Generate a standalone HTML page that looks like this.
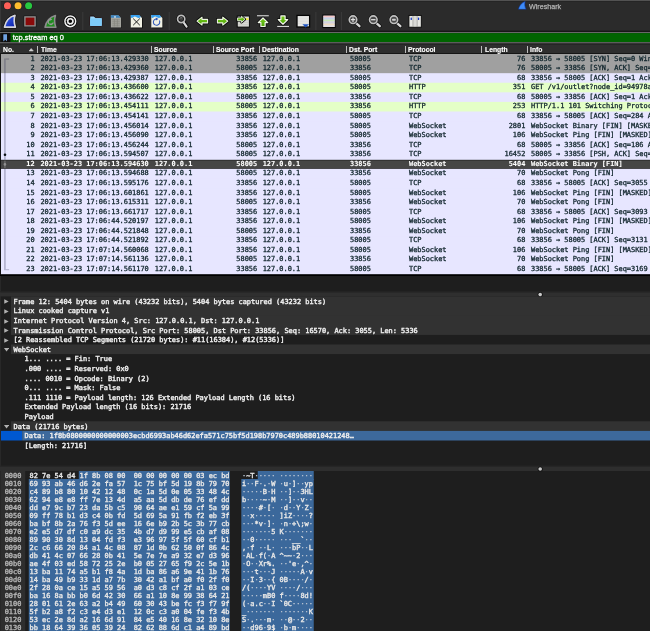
<!DOCTYPE html>
<html lang="en">
<head>
<meta charset="utf-8">
<title>Wireshark</title>
<style>
html,body{margin:0;padding:0;background:#1e1e1e;}
body{width:650px;height:631px;overflow:hidden;font-family:"Liberation Sans",sans-serif;}
#win{will-change:transform;position:absolute;left:0;top:0;width:650px;height:631px;overflow:hidden;background:#1e1e1e;}
i{font-style:normal}
/* ---- title / toolbar ---- */
#bg{position:absolute;left:0;top:0;width:650px;height:631px}
#titlebar{position:absolute;left:0;top:0;width:650px;height:31px}
#title{-webkit-text-stroke:0.25px;position:absolute;left:518.3px;top:1.2px;height:10px;white-space:nowrap;color:#b4b4b4;font-size:7.2px;line-height:10px}
#title svg{position:absolute;left:0;top:0.2px}
#title span{position:absolute;left:10.9px;top:0.5px;font-size:7.7px;transform:scaleX(.93);transform-origin:0 0}
#tb{position:absolute;left:0;top:0}
/* ---- filter ---- */
#filterbar{position:absolute;left:0;top:32px;width:650px;height:12px}
#bm{position:absolute;left:1.5px;top:1px;width:8.6px;height:10px}
#bm svg{position:absolute;left:1.4px;top:0.9px}
#filter{-webkit-text-stroke:0.3px #fff;position:absolute;left:10.6px;top:1px;width:640px;height:10px;color:#fff;font-size:7.7px;line-height:10px;padding-left:1.8px;white-space:nowrap;box-sizing:border-box;transform:scaleX(.965);transform-origin:0 0}
/* ---- packet list ---- */
#plist{position:absolute;left:0;top:44px;width:650px;height:249px;}
#phead{position:absolute;left:0;top:0;width:650px;height:9.8px;}
.hc{-webkit-text-stroke:0.15px #fff;position:absolute;top:1px;color:#fff;font-weight:bold;font-size:7.8px;line-height:10px;white-space:nowrap;transform:scaleX(.868);transform-origin:0 0}
.hs{position:absolute;top:2px;width:1px;height:7.2px;background:#bdbdbd}
.sort{position:absolute;left:28.4px;top:2.8px;width:6.4px;height:4.8px}
.pr{-webkit-text-stroke:0.3px;position:absolute;left:1px;width:649px;height:9.66px;margin-top:-44px;font-family:"DejaVu Sans Mono","Liberation Mono",monospace;font-size:6.93px;line-height:10px;color:#12272e;white-space:pre;overflow:hidden}
.pr.sel{color:#fff;font-weight:bold;-webkit-text-stroke:0.08px}
.pt_{position:absolute;left:0;width:649px;height:10px}
.c{position:absolute;top:0}
.no{right:615.3px}
.tm{left:39.4px}
.sa{left:153.8px}
.sp{right:392.8px}
.da{left:261.7px}
.dp{left:349px}
.pt{left:408px}
.ln{right:124.7px}
.inf{left:530px}
/* ---- splitters ---- */
.split{position:absolute;left:0;width:650px}
/* ---- tree ---- */
#tree{position:absolute;left:0;top:0;width:650px;height:0}
.tr{-webkit-text-stroke:0.42px;position:absolute;left:0;width:650px;height:9.6px;font-family:"DejaVu Sans Mono","Liberation Mono",monospace;font-size:6.93px;line-height:10px;color:#ececec;white-space:pre}
.tw{position:absolute;left:0.6px;top:0.9px;width:8.6px;height:8.6px;fill:#b0b0b0}
.tt{position:absolute;left:13.5px;z-index:2}
.kid .tt{left:24.6px}
/* ---- hex ---- */
#hex{position:absolute;left:0;top:0;width:650px;height:0}
.hr{-webkit-text-stroke:0.38px;position:absolute;left:0;width:650px;height:8px;font-family:"DejaVu Sans Mono","Liberation Mono",monospace;font-size:6.93px;line-height:8px;color:#e6e6e6;white-space:pre}
.ht{position:absolute;left:0;width:650px;height:8px}
.hr span{position:absolute;top:0}
.ho{left:4.7px;color:#b4b4b4}
.hb{left:29.5px}
.ha{left:242px}
.hr b{font-weight:normal}
.ha i{color:#b9c4d2}

</style>
</head>
<body>
<div id="win">
<svg id="bg" width="650" height="631" viewBox="0 0 650 631">
<rect x="0" y="0" width="650" height="30.8" fill="#2b2b2b"/>
<rect x="0" y="0" width="650" height="0.8" fill="#6e6e6e"/>
<rect x="0" y="0.8" width="650" height="0.6" fill="#1f1f1f"/>
<rect x="0" y="0.8" width="0.9" height="30" fill="#3a3a3a"/>
<rect x="0" y="30.8" width="650" height="1.2" fill="#171717"/>
<rect x="0" y="32" width="650" height="12.5" fill="#1b1b1b"/>
<rect x="0" y="32" width="650" height="1.1" fill="#676767"/>
<rect x="0" y="42" width="650" height="1.4" fill="#5c5c5c"/>
<rect x="1.4" y="33.1" width="8.8" height="8.9" fill="#0d0d0d"/>
<rect x="10.6" y="33.1" width="639.4" height="8.9" fill="#006400"/>
<rect x="0" y="44.5" width="650" height="8.6" fill="#2e2e2e"/>
<rect x="0" y="53.1" width="650" height="0.8" fill="#151515"/>
<rect x="1.00" y="54.00" width="649.00" height="10.58" fill="#a0a0a0"/>
<rect x="1.00" y="63.58" width="649.00" height="10.58" fill="#a0a0a0"/>
<rect x="1.00" y="73.17" width="649.00" height="10.58" fill="#e7e6ff"/>
<rect x="1.00" y="82.75" width="649.00" height="10.58" fill="#e4ffc7"/>
<rect x="1.00" y="92.33" width="649.00" height="10.58" fill="#e7e6ff"/>
<rect x="1.00" y="101.91" width="649.00" height="10.58" fill="#e4ffc7"/>
<rect x="1.00" y="111.50" width="649.00" height="10.58" fill="#e7e6ff"/>
<rect x="1.00" y="121.08" width="649.00" height="10.58" fill="#e7e6ff"/>
<rect x="1.00" y="130.66" width="649.00" height="10.58" fill="#e7e6ff"/>
<rect x="1.00" y="140.25" width="649.00" height="10.58" fill="#e7e6ff"/>
<rect x="1.00" y="149.83" width="649.00" height="10.58" fill="#e7e6ff"/>
<rect x="1.00" y="159.41" width="649.00" height="10.58" fill="#e7e6ff"/>
<rect x="1.00" y="169.00" width="649.00" height="10.58" fill="#e7e6ff"/>
<rect x="1.00" y="178.58" width="649.00" height="10.58" fill="#e7e6ff"/>
<rect x="1.00" y="188.16" width="649.00" height="10.58" fill="#e7e6ff"/>
<rect x="1.00" y="197.75" width="649.00" height="10.58" fill="#e7e6ff"/>
<rect x="1.00" y="207.33" width="649.00" height="10.58" fill="#e7e6ff"/>
<rect x="1.00" y="216.91" width="649.00" height="10.58" fill="#e7e6ff"/>
<rect x="1.00" y="226.49" width="649.00" height="10.58" fill="#e7e6ff"/>
<rect x="1.00" y="236.08" width="649.00" height="10.58" fill="#e7e6ff"/>
<rect x="1.00" y="245.66" width="649.00" height="10.58" fill="#e7e6ff"/>
<rect x="1.00" y="255.24" width="649.00" height="10.58" fill="#e7e6ff"/>
<rect x="1.00" y="264.83" width="649.00" height="9.58" fill="#e7e6ff"/>
<rect x="1.00" y="159.80" width="649.00" height="9.00" fill="#232323"/>
<rect x="1.00" y="160.50" width="649.00" height="7.60" fill="#464646"/>
<rect x="4.00" y="58.49" width="1.80" height="101.31" fill="rgba(36,36,70,0.25)"/>
<rect x="4.00" y="168.80" width="1.80" height="101.42" fill="rgba(36,36,70,0.25)"/>
<rect x="5.80" y="58.49" width="3.30" height="1.10" fill="rgba(36,36,70,0.33)"/>
<rect x="5.80" y="269.12" width="3.30" height="1.10" fill="rgba(36,36,70,0.25)"/>
<rect x="4.00" y="160.50" width="1.80" height="7.60" fill="rgba(255,255,255,0.16)"/>
<circle cx="5" cy="154.82" r="1.3" fill="#0a0f12"/>
<circle cx="4.9" cy="164.40" r="1.4" fill="rgba(255,255,255,0.3)"/>
<rect x="0.00" y="274.41" width="650.00" height="1.60" fill="#000"/>
<rect x="0.00" y="53.90" width="0.90" height="220.51" fill="rgba(0,0,0,0.33)"/>
<rect x="0.00" y="276.01" width="0.90" height="354.99" fill="#2a2a2a"/>
<rect x="0.00" y="291.20" width="650.00" height="1.40" fill="#262626"/>
<rect x="0.00" y="292.50" width="650.00" height="3.90" fill="#2f2f2f"/>
<circle cx="540.2" cy="294.6" r="2.6" fill="#121212"/><circle cx="540.2" cy="294.6" r="1.8" fill="#cacaca"/>
<rect x="11.00" y="296.50" width="639.00" height="10.60" fill="#323232"/>
<rect x="11.00" y="306.10" width="639.00" height="10.60" fill="#323232"/>
<rect x="11.00" y="315.70" width="639.00" height="10.60" fill="#323232"/>
<rect x="11.00" y="325.30" width="639.00" height="9.60" fill="#323232"/>
<rect x="11.00" y="344.50" width="639.00" height="9.60" fill="#323232"/>
<rect x="11.00" y="421.30" width="639.00" height="9.60" fill="#323232"/>
<rect x="1.00" y="430.90" width="21.20" height="9.60" fill="#0058d0"/>
<rect x="22.20" y="430.90" width="627.80" height="9.60" fill="#3d699c"/>
<rect x="0.00" y="465.60" width="650.00" height="1.20" fill="#262626"/>
<rect x="0.00" y="466.70" width="650.00" height="4.30" fill="#2e2e2e"/>
<circle cx="540.2" cy="469" r="2.6" fill="#121212"/><circle cx="540.2" cy="469" r="1.8" fill="#cacaca"/>
<rect x="1.00" y="471.00" width="24.20" height="160.00" fill="#2e2e2e"/>
<rect x="78.81" y="471.00" width="150.93" height="9.00" fill="#3b689b"/>
<rect x="257.77" y="471.00" width="55.98" height="9.00" fill="#3b689b"/>
<rect x="28.80" y="479.00" width="200.94" height="152.00" fill="#3b689b"/>
<rect x="241.30" y="479.00" width="72.45" height="152.00" fill="#3b689b"/>
</svg>

<div id="titlebar">
<div id="title"><svg viewBox="0 0 16 16" width="8.6" height="8.6"><path d="M0.6 15.4 C2 9.2 6.5 2.8 13.6 0.6 C12.2 5.2 12.6 10.6 15.4 15.4 Z" fill="#2f6fe0" stroke="#0b2f86" stroke-width="0.8"/><path d="M2 14.6 C3.4 10 6.6 5.4 11.6 3 C10.8 7.2 11.4 11 13.2 14.6 Z" fill="#3f8cf6"/></svg><span>Wireshark</span></div>
<svg id="tb" width="650" height="32" viewBox="0 0 650 32">
<defs>
<linearGradient id="gb" x1="0" y1="0" x2="1" y2="1"><stop offset="0" stop-color="#3f6cf0"/><stop offset="1" stop-color="#0618a8"/></linearGradient>
<linearGradient id="gg" x1="0" y1="0" x2="0" y2="1"><stop offset="0" stop-color="#7ccc20"/><stop offset="1" stop-color="#4aa406"/></linearGradient>
</defs>
<!-- window buttons -->
<circle cx="7.45" cy="5.85" r="3.95" fill="#1a1a1a"/><circle cx="7.45" cy="5.85" r="3.5" fill="#fe5f57"/>
<circle cx="18.05" cy="5.85" r="3.95" fill="#1a1a1a"/><circle cx="18.05" cy="5.85" r="3.5" fill="#febc2e"/>
<circle cx="28.6" cy="5.85" r="3.95" fill="#1a1a1a"/><circle cx="28.6" cy="5.85" r="3.5" fill="#28c840"/>
<!-- start capture (blue fin) -->
<g>
<path d="M4.4 27.1 C5.6 21.6 9.3 16.9 15 15.3 C13.8 19.2 14 23.4 15.4 27.1 Z" fill="#0a0a0a" stroke="#0a0a0a" stroke-width="2.9" stroke-linejoin="round"/>
<path d="M4.4 27.1 C5.6 21.6 9.3 16.9 15 15.3 C13.8 19.2 14 23.4 15.4 27.1 Z" fill="url(#gb)" stroke="#d4d4dc" stroke-width="1.7" stroke-linejoin="round"/>
</g>
<!-- stop -->
<rect x="24.9" y="16.9" width="10.2" height="9" fill="#8c0f0f" stroke="#0c0c0c" stroke-width="2.4"/><rect x="24.9" y="16.9" width="10.2" height="9" fill="#8a0a0a" stroke="#8e8e8e" stroke-width="1.4"/>
<!-- restart (green fin) -->
<g>
<path d="M45 27.3 C46.2 21.8 49.8 17.2 55.4 15.6 C54.2 19.5 54.4 23.6 55.8 27.3 Z" fill="#1f8c1f" stroke="#8c8c8c" stroke-width="1.6" stroke-linejoin="round"/>
<path d="M51.2 19.6 A2.5 2.5 0 1 0 53.2 22.4" fill="none" stroke="#9a9a9a" stroke-width="1.1"/>
<path d="M49.4 23.6 L52.6 23.6 L51 25.6 Z" fill="#9a9a9a"/>
<path d="M50.4 17.8 L52.2 19.8 L50 20.6 Z" fill="#9a9a9a"/>
</g>
<!-- options -->
<g>
<circle cx="70.3" cy="21.3" r="6.8" fill="#070707"/>
<circle cx="70.3" cy="21.3" r="5.4" fill="none" stroke="#f4f4f4" stroke-width="1.45"/>
<circle cx="70.3" cy="21.3" r="2.55" fill="none" stroke="#f0f0f0" stroke-width="1.5"/>
<circle cx="70.3" cy="21.3" r="3.3" fill="none" stroke="#e8e8e8" stroke-width="0.8" stroke-dasharray="1.2 1.39"/>
</g>
<rect x="82.3" y="12" width="1" height="18" fill="#3b3b3b"/>
<!-- open folder -->
<g>
<path d="M89.7 16.9 Q89.7 16 90.6 16 L94 16 L95.3 17.6 L101.3 17.6 Q102.2 17.6 102.2 18.5 L102.2 25.4 Q102.2 26.3 101.3 26.3 L90.6 26.3 Q89.7 26.3 89.7 25.4 Z" fill="#9ad6f9" stroke="#1c0808" stroke-width="0.9"/>
<path d="M90.1 18.4 L101.8 18.4 L101.8 25.3 Q101.8 25.9 101.2 25.9 L90.7 25.9 Q90.1 25.9 90.1 25.3 Z" fill="#7ecbf8"/>
</g>
<!-- save -->
<g>
<path d="M111.4 15.8 L119 15.8 L121.6 18.4 L121.6 28 L111.4 28 Z" fill="#101010"/>
<path d="M110.9 15.2 L118.4 15.2 L121.1 17.9 L121.1 27.5 L110.9 27.5 Z" fill="#a4a49e"/>
<path d="M110.9 15.2 L118.4 15.2 L120.2 17 L120.2 17.7 L110.9 17.7 Z" fill="#3a84c0"/>
<rect x="114.2" y="16.2" width="1.6" height="1.5" fill="#dfe8f0"/>
<path d="M112.2 19.8 H119.8 M112.2 21.8 H119.8 M112.2 23.8 H119.8 M112.2 25.8 H119.8 M114.4 19 V26.4 M117.4 19 V26.4" stroke="#85857e" stroke-width="0.7" fill="none"/>
</g>
<!-- close -->
<g>
<path d="M131.5 15.5 L139.6 15.5 L142.7 18.6 L142.7 28.2 L131.5 28.2 Z" fill="#080808"/>
<path d="M130.8 14.9 L138.9 14.9 L142 18 L142 27.6 L130.8 27.6 Z" fill="#f0f0e4"/>
<path d="M130.8 14.9 L138.9 14.9 L140.6 16.6 L140.6 17.2 Q138.4 18.6 136.6 17.2 Q134.6 15.8 133.4 17.2 Q132 18.6 130.8 17.6 Z" fill="#36a0f0"/>
<path d="M133.2 18.6 L139.8 25.2 M139.8 18.6 L133.2 25.2" stroke="#141414" stroke-width="0.95" fill="none"/>
</g>
<!-- reload -->
<g>
<path d="M152 15.5 L160.1 15.5 L163.1 18.6 L163.1 28.2 L152 28.2 Z" fill="#080808"/>
<path d="M151.3 14.9 L159.4 14.9 L162.4 18 L162.4 27.6 L151.3 27.6 Z" fill="#f0f0e4"/>
<path d="M151.3 14.9 L159.4 14.9 L161 16.6 L161 17.2 Q158.8 18.6 157 17.2 Q155 15.8 153.8 17.2 Q152.4 18.6 151.3 17.6 Z" fill="#36a0f0"/>
<path d="M159.4 20.6 A3.2 3.2 0 1 1 156.2 18.9" fill="none" stroke="#2c55b8" stroke-width="1.05"/>
<path d="M155.8 17.4 L158.4 18.9 L155.9 20.5 Z" fill="#2c55b8"/>
</g>
<rect x="168.7" y="12" width="1" height="18" fill="#3b3b3b"/>
<!-- find -->
<g>
<path d="M183.6 22.3 L186.6 26.6" stroke="#0a0a0a" stroke-width="3.8" stroke-linecap="round"/>
<circle cx="181.2" cy="19" r="3.6" fill="#3e3e3e" stroke="#0a0a0a" stroke-width="3"/>
<path d="M183.6 22.3 L186.6 26.6" stroke="#dadada" stroke-width="2.1" stroke-linecap="round"/>
<circle cx="181.2" cy="19" r="3.6" fill="none" stroke="#bcbcbc" stroke-width="1.7"/>
<path d="M179.6 18.6 Q180.6 17.2 182.4 17.8" stroke="#8a8a8a" stroke-width="0.8" fill="none"/>
</g>
<!-- back -->
<g>
<path d="M197 21.1 L202 17.1 L202 19.3 L207.6 19.3 L207.6 22.9 L202 22.9 L202 25.1 Z" fill="#0a0a0a" stroke="#0a0a0a" stroke-width="2.8" stroke-linejoin="round"/>
<path d="M197 21.1 L202 17.1 L202 19.3 L207.6 19.3 L207.6 22.9 L202 22.9 L202 25.1 Z" fill="url(#gg)" stroke="#eef4e4" stroke-width="1.15" stroke-linejoin="round"/>
</g>
<!-- forward -->
<g>
<path d="M227.8 21.1 L222.8 17.1 L222.8 19.3 L217.4 19.3 L217.4 22.9 L222.8 22.9 L222.8 25.1 Z" fill="#0a0a0a" stroke="#0a0a0a" stroke-width="2.8" stroke-linejoin="round"/>
<path d="M227.8 21.1 L222.8 17.1 L222.8 19.3 L217.4 19.3 L217.4 22.9 L222.8 22.9 L222.8 25.1 Z" fill="url(#gg)" stroke="#eef4e4" stroke-width="1.15" stroke-linejoin="round"/>
</g>
<!-- go to packet -->
<g>
<rect x="237.2" y="16" width="12.2" height="11" fill="#dededa" stroke="#0a0a0a" stroke-width="1"/>
<path d="M238.2 20.8 H248.8 M238.2 22.6 H248.8 M238.2 24.4 H248.8 M238.2 26 H248.8" stroke="#bcbcb8" stroke-width="0.55"/>
<rect x="245.4" y="18.3" width="3.2" height="1.5" fill="#f6e830"/>
<path d="M245 19.3 L241.4 16.2 L241.4 17.9 L237.6 17.9 L237.6 20.7 L241.4 20.7 L241.4 22.4 Z" fill="#0a0a0a" stroke="#0a0a0a" stroke-width="2.2" stroke-linejoin="round"/>
<path d="M245 19.3 L241.4 16.2 L241.4 17.9 L237.6 17.9 L237.6 20.7 L241.4 20.7 L241.4 22.4 Z" fill="url(#gg)" stroke="#eef4e4" stroke-width="0.9" stroke-linejoin="round"/>
</g>
<!-- go first -->
<g>
<rect x="257" y="15.2" width="11.8" height="1.1" fill="#d6d6d6"/>
<path d="M263 18 L267.8 22.6 L265.1 22.6 L265.1 26.5 L260.9 26.5 L260.9 22.6 L258.2 22.6 Z" fill="#0a0a0a" stroke="#0a0a0a" stroke-width="2.7" stroke-linejoin="round"/>
<path d="M263 18 L267.8 22.6 L265.1 22.6 L265.1 26.5 L260.9 26.5 L260.9 22.6 L258.2 22.6 Z" fill="url(#gg)" stroke="#f2f6ea" stroke-width="1.2" stroke-linejoin="round"/>
</g>
<!-- go last -->
<g>
<rect x="277.2" y="25.9" width="11.8" height="1.1" fill="#d6d6d6"/>
<path d="M283 24.2 L287.8 19.6 L285.1 19.6 L285.1 15.9 L280.9 15.9 L280.9 19.6 L278.2 19.6 Z" fill="#0a0a0a" stroke="#0a0a0a" stroke-width="2.7" stroke-linejoin="round"/>
<path d="M283 24.2 L287.8 19.6 L285.1 19.6 L285.1 15.9 L280.9 15.9 L280.9 19.6 L278.2 19.6 Z" fill="url(#gg)" stroke="#f2f6ea" stroke-width="1.2" stroke-linejoin="round"/>
</g>
<!-- autoscroll -->
<g>
<rect x="297" y="15.4" width="12.6" height="11.6" fill="#e9e9e7" stroke="#050505" stroke-width="1.3"/>
<path d="M298 18.2 H308.6 M298 20 H308.6 M298 21.8 H308.6 M298 23.6 H308.6" stroke="#d2d2ce" stroke-width="0.5"/>
<path d="M302.4 24.2 L309 24.2 L305.7 27.6 Z" fill="#1f54c0"/>
</g>
<rect x="315.4" y="12" width="1" height="18" fill="#3b3b3b"/>
<!-- colorize -->
<g>
<rect x="322.8" y="15.1" width="12.4" height="12.4" fill="#dcdce4" stroke="#060606" stroke-width="1.1"/>
<rect x="323.4" y="15.7" width="11.2" height="1.8" fill="#f4c4c4"/>
<rect x="323.4" y="17.5" width="11.2" height="2.1" fill="#c4d0e8"/>
<rect x="323.4" y="19.6" width="11.2" height="1.8" fill="#c8e8b4"/>
<rect x="323.4" y="21.4" width="11.2" height="2.2" fill="#d2d2e0"/>
<rect x="323.4" y="23.6" width="11.2" height="1.7" fill="#f0dcc0"/>
<rect x="323.4" y="25.3" width="11.2" height="1.6" fill="#e4e0e0"/>
</g>
<rect x="340.9" y="12" width="1" height="18" fill="#3b3b3b"/>
<!-- zoom in -->
<g>
<path d="M355.8 22.8 L359.5 26.2" stroke="#0c0c0c" stroke-width="3.6" stroke-linecap="round"/><path d="M355.8 22.8 L359.5 26.2" stroke="#d6d6d6" stroke-width="2.3" stroke-linecap="round"/>
<circle cx="353" cy="19.7" r="3.8" fill="#484848" stroke="#0c0c0c" stroke-width="2.6"/><circle cx="353" cy="19.7" r="3.8" fill="#484848" stroke="#c0c0c0" stroke-width="1.6"/>
<path d="M350.8 19.7 H355.2 M353 17.5 V21.9" stroke="#e0e0e0" stroke-width="1.2"/>
</g>
<!-- zoom out -->
<g>
<path d="M376.1 22.8 L379.8 26.2" stroke="#0c0c0c" stroke-width="3.6" stroke-linecap="round"/><path d="M376.1 22.8 L379.8 26.2" stroke="#d6d6d6" stroke-width="2.3" stroke-linecap="round"/>
<circle cx="373.3" cy="19.7" r="3.8" fill="#484848" stroke="#0c0c0c" stroke-width="2.6"/><circle cx="373.3" cy="19.7" r="3.8" fill="#484848" stroke="#c0c0c0" stroke-width="1.6"/>
<path d="M371.1 19.7 H375.5" stroke="#e0e0e0" stroke-width="1.3"/>
</g>
<!-- zoom reset -->
<g>
<path d="M396.7 22.8 L400.4 26.2" stroke="#0c0c0c" stroke-width="3.6" stroke-linecap="round"/><path d="M396.7 22.8 L400.4 26.2" stroke="#d6d6d6" stroke-width="2.3" stroke-linecap="round"/>
<circle cx="393.9" cy="19.7" r="3.8" fill="#484848" stroke="#0c0c0c" stroke-width="2.6"/><circle cx="393.9" cy="19.7" r="3.8" fill="#484848" stroke="#c0c0c0" stroke-width="1.6"/>
<rect x="392" y="18.7" width="3.8" height="2" rx="0.8" fill="#cfcfcf"/>
</g>
<!-- resize columns -->
<g>
<rect x="408.9" y="15.4" width="12.4" height="11.8" fill="#e8e8e4" stroke="#060606" stroke-width="0.9"/>
<path d="M413 15.8 V26.8 M417.1 15.8 V26.8" stroke="#8c8c88" stroke-width="0.7"/>
<path d="M414.4 15.8 V26.8 M415.7 15.8 V26.8" stroke="#c8c8c4" stroke-width="0.5"/>
<rect x="410.6" y="17.4" width="1.3" height="2.6" rx="0.6" fill="#1a3cc8"/>
<rect x="417.9" y="17.4" width="1.3" height="2.6" rx="0.6" fill="#1a3cc8"/>
</g>
</svg>

</div>
<div id="filterbar"><div id="bm"><svg viewBox="0 0 6 10" width="4.6" height="7.8"><path d="M0.4 0.6 Q0.4 0.2 0.9 0.2 L5.1 0.2 Q5.6 0.2 5.6 0.6 L5.6 9.8 L3 7.4 L0.4 9.8 Z" fill="#6fa2e2"/></svg></div><div id="filter">tcp.stream eq 0</div></div>
<div id="plist">
<div id="phead"><span class="hc" style="left:3.0px">No.</span><i class="hs" style="left:36.9px"></i><span class="hc" style="left:40.5px">Time</span><i class="hs" style="left:151.1px"></i><span class="hc" style="left:154.0px">Source</span><i class="hs" style="left:212.9px"></i><span class="hc" style="left:216.3px">Source Port</span><i class="hs" style="left:259.4px"></i><span class="hc" style="left:262.4px">Destination</span><i class="hs" style="left:346.3px"></i><span class="hc" style="left:349.2px">Dst. Port</span><i class="hs" style="left:405.4px"></i><span class="hc" style="left:408.4px">Protocol</span><i class="hs" style="left:481.4px"></i><span class="hc" style="left:484.6px">Length</span><i class="hs" style="left:527.3px"></i><span class="hc" style="left:530.2px">Info</span><svg class="sort" viewBox="0 0 8 6"><path d="M1.4 4.9 L4 2 L6.6 4.9 Z" fill="#d0d0d0" stroke="#d0d0d0" stroke-width="0.8" stroke-linejoin="round"/></svg></div>
<div class="pr syn" style="top:54.00px"><div class="pt_" style="top:0.02px"><span class="c no">1</span><span class="c tm">2021-03-23 17:06:13.429330</span><span class="c sa">127.0.0.1</span><span class="c sp">33856</span><span class="c da">127.0.0.1</span><span class="c dp">58005</span><span class="c pt">TCP</span><span class="c ln">76</span><span class="c inf">33856 → 58005 [SYN] Seq=0 Win=65495 Len=0 MSS=65495</span></div></div>
<div class="pr syn" style="top:63.58px"><div class="pt_" style="top:-0.56px"><span class="c no">2</span><span class="c tm">2021-03-23 17:06:13.429360</span><span class="c sa">127.0.0.1</span><span class="c sp">58005</span><span class="c da">127.0.0.1</span><span class="c dp">33856</span><span class="c pt">TCP</span><span class="c ln">76</span><span class="c inf">58005 → 33856 [SYN, ACK] Seq=0 Ack=1 Win=65483 Len=0</span></div></div>
<div class="pr tcp" style="top:73.17px"><div class="pt_" style="top:-0.15px"><span class="c no">3</span><span class="c tm">2021-03-23 17:06:13.429387</span><span class="c sa">127.0.0.1</span><span class="c sp">33856</span><span class="c da">127.0.0.1</span><span class="c dp">58005</span><span class="c pt">TCP</span><span class="c ln">68</span><span class="c inf">33856 → 58005 [ACK] Seq=1 Ack=1 Win=65536 Len=0</span></div></div>
<div class="pr grn" style="top:82.75px"><div class="pt_" style="top:-0.73px"><span class="c no">4</span><span class="c tm">2021-03-23 17:06:13.436600</span><span class="c sa">127.0.0.1</span><span class="c sp">33856</span><span class="c da">127.0.0.1</span><span class="c dp">58005</span><span class="c pt">HTTP</span><span class="c ln">351</span><span class="c inf">GET /v1/outlet?node_id=94978a3c HTTP/1.1</span></div></div>
<div class="pr tcp" style="top:92.33px"><div class="pt_" style="top:-0.31px"><span class="c no">5</span><span class="c tm">2021-03-23 17:06:13.436622</span><span class="c sa">127.0.0.1</span><span class="c sp">58005</span><span class="c da">127.0.0.1</span><span class="c dp">33856</span><span class="c pt">TCP</span><span class="c ln">68</span><span class="c inf">58005 → 33856 [ACK] Seq=1 Ack=284 Win=65280 Len=0</span></div></div>
<div class="pr grn" style="top:101.91px"><div class="pt_" style="top:-0.89px"><span class="c no">6</span><span class="c tm">2021-03-23 17:06:13.454111</span><span class="c sa">127.0.0.1</span><span class="c sp">58005</span><span class="c da">127.0.0.1</span><span class="c dp">33856</span><span class="c pt">HTTP</span><span class="c ln">253</span><span class="c inf">HTTP/1.1 101 Switching Protocols</span></div></div>
<div class="pr tcp" style="top:111.50px"><div class="pt_" style="top:-0.48px"><span class="c no">7</span><span class="c tm">2021-03-23 17:06:13.454141</span><span class="c sa">127.0.0.1</span><span class="c sp">33856</span><span class="c da">127.0.0.1</span><span class="c dp">58005</span><span class="c pt">TCP</span><span class="c ln">68</span><span class="c inf">33856 → 58005 [ACK] Seq=284 Ack=186 Win=65408 Len=0</span></div></div>
<div class="pr tcp" style="top:121.08px"><div class="pt_" style="top:-0.06px"><span class="c no">8</span><span class="c tm">2021-03-23 17:06:13.456014</span><span class="c sa">127.0.0.1</span><span class="c sp">33856</span><span class="c da">127.0.0.1</span><span class="c dp">58005</span><span class="c pt">WebSocket</span><span class="c ln">2801</span><span class="c inf">WebSocket Binary [FIN] [MASKED]</span></div></div>
<div class="pr tcp" style="top:130.66px"><div class="pt_" style="top:-0.64px"><span class="c no">9</span><span class="c tm">2021-03-23 17:06:13.456090</span><span class="c sa">127.0.0.1</span><span class="c sp">33856</span><span class="c da">127.0.0.1</span><span class="c dp">58005</span><span class="c pt">WebSocket</span><span class="c ln">106</span><span class="c inf">WebSocket Ping [FIN] [MASKED]</span></div></div>
<div class="pr tcp" style="top:140.25px"><div class="pt_" style="top:-0.23px"><span class="c no">10</span><span class="c tm">2021-03-23 17:06:13.456244</span><span class="c sa">127.0.0.1</span><span class="c sp">58005</span><span class="c da">127.0.0.1</span><span class="c dp">33856</span><span class="c pt">TCP</span><span class="c ln">68</span><span class="c inf">58005 → 33856 [ACK] Seq=186 Ack=3055 Win=63488 Len=0</span></div></div>
<div class="pr tcp" style="top:149.83px"><div class="pt_" style="top:-0.81px"><span class="c no">11</span><span class="c tm">2021-03-23 17:06:13.594507</span><span class="c sa">127.0.0.1</span><span class="c sp">58005</span><span class="c da">127.0.0.1</span><span class="c dp">33856</span><span class="c pt">TCP</span><span class="c ln">16452</span><span class="c inf">58005 → 33856 [PSH, ACK] Seq=186 Ack=3055 Win=65536</span></div></div>
<div class="pr sel" style="top:159.41px"><div class="pt_" style="top:-0.39px"><span class="c no">12</span><span class="c tm">2021-03-23 17:06:13.594630</span><span class="c sa">127.0.0.1</span><span class="c sp">58005</span><span class="c da">127.0.0.1</span><span class="c dp">33856</span><span class="c pt">WebSocket</span><span class="c ln">5404</span><span class="c inf">WebSocket Binary [FIN]</span></div></div>
<div class="pr tcp" style="top:169.00px"><div class="pt_" style="top:-0.98px"><span class="c no">13</span><span class="c tm">2021-03-23 17:06:13.594688</span><span class="c sa">127.0.0.1</span><span class="c sp">58005</span><span class="c da">127.0.0.1</span><span class="c dp">33856</span><span class="c pt">WebSocket</span><span class="c ln">70</span><span class="c inf">WebSocket Pong [FIN]</span></div></div>
<div class="pr tcp" style="top:178.58px"><div class="pt_" style="top:-0.56px"><span class="c no">14</span><span class="c tm">2021-03-23 17:06:13.595176</span><span class="c sa">127.0.0.1</span><span class="c sp">33856</span><span class="c da">127.0.0.1</span><span class="c dp">58005</span><span class="c pt">TCP</span><span class="c ln">68</span><span class="c inf">33856 → 58005 [ACK] Seq=3055 Ack=21906 Win=48128 Len=0</span></div></div>
<div class="pr tcp" style="top:188.16px"><div class="pt_" style="top:-0.14px"><span class="c no">15</span><span class="c tm">2021-03-23 17:06:13.601861</span><span class="c sa">127.0.0.1</span><span class="c sp">33856</span><span class="c da">127.0.0.1</span><span class="c dp">58005</span><span class="c pt">WebSocket</span><span class="c ln">106</span><span class="c inf">WebSocket Ping [FIN] [MASKED]</span></div></div>
<div class="pr tcp" style="top:197.75px"><div class="pt_" style="top:-0.73px"><span class="c no">16</span><span class="c tm">2021-03-23 17:06:13.615311</span><span class="c sa">127.0.0.1</span><span class="c sp">58005</span><span class="c da">127.0.0.1</span><span class="c dp">33856</span><span class="c pt">WebSocket</span><span class="c ln">70</span><span class="c inf">WebSocket Pong [FIN]</span></div></div>
<div class="pr tcp" style="top:207.33px"><div class="pt_" style="top:-0.31px"><span class="c no">17</span><span class="c tm">2021-03-23 17:06:13.661717</span><span class="c sa">127.0.0.1</span><span class="c sp">33856</span><span class="c da">127.0.0.1</span><span class="c dp">58005</span><span class="c pt">TCP</span><span class="c ln">68</span><span class="c inf">33856 → 58005 [ACK] Seq=3093 Ack=21910 Win=65536 Len=0</span></div></div>
<div class="pr tcp" style="top:216.91px"><div class="pt_" style="top:-0.89px"><span class="c no">18</span><span class="c tm">2021-03-23 17:06:44.520197</span><span class="c sa">127.0.0.1</span><span class="c sp">33856</span><span class="c da">127.0.0.1</span><span class="c dp">58005</span><span class="c pt">WebSocket</span><span class="c ln">106</span><span class="c inf">WebSocket Ping [FIN] [MASKED]</span></div></div>
<div class="pr tcp" style="top:226.49px"><div class="pt_" style="top:-0.47px"><span class="c no">19</span><span class="c tm">2021-03-23 17:06:44.521848</span><span class="c sa">127.0.0.1</span><span class="c sp">58005</span><span class="c da">127.0.0.1</span><span class="c dp">33856</span><span class="c pt">WebSocket</span><span class="c ln">70</span><span class="c inf">WebSocket Pong [FIN]</span></div></div>
<div class="pr tcp" style="top:236.08px"><div class="pt_" style="top:-1.06px"><span class="c no">20</span><span class="c tm">2021-03-23 17:06:44.521892</span><span class="c sa">127.0.0.1</span><span class="c sp">33856</span><span class="c da">127.0.0.1</span><span class="c dp">58005</span><span class="c pt">TCP</span><span class="c ln">68</span><span class="c inf">33856 → 58005 [ACK] Seq=3131 Ack=21914 Win=65536 Len=0</span></div></div>
<div class="pr tcp" style="top:245.66px"><div class="pt_" style="top:-0.64px"><span class="c no">21</span><span class="c tm">2021-03-23 17:07:14.560068</span><span class="c sa">127.0.0.1</span><span class="c sp">33856</span><span class="c da">127.0.0.1</span><span class="c dp">58005</span><span class="c pt">WebSocket</span><span class="c ln">106</span><span class="c inf">WebSocket Ping [FIN] [MASKED]</span></div></div>
<div class="pr tcp" style="top:255.24px"><div class="pt_" style="top:-1.22px"><span class="c no">22</span><span class="c tm">2021-03-23 17:07:14.561136</span><span class="c sa">127.0.0.1</span><span class="c sp">58005</span><span class="c da">127.0.0.1</span><span class="c dp">33856</span><span class="c pt">WebSocket</span><span class="c ln">70</span><span class="c inf">WebSocket Pong [FIN]</span></div></div>
<div class="pr tcp" style="top:264.83px"><div class="pt_" style="top:-0.81px"><span class="c no">23</span><span class="c tm">2021-03-23 17:07:14.561170</span><span class="c sa">127.0.0.1</span><span class="c sp">33856</span><span class="c da">127.0.0.1</span><span class="c dp">58005</span><span class="c pt">TCP</span><span class="c ln">68</span><span class="c inf">33856 → 58005 [ACK] Seq=3169 Ack=21918 Win=65536 Len=0</span></div></div>
</div>
<div class="split" style="top:292.6px;height:3.7px"></div>
<div id="tree">
<div class="tr top" style="top:296.50px"><svg class="tw" viewBox="0 0 10 10"><path d="M3.8 2.6 L8.95 5.25 L3.8 7.9 Z"/></svg><span class="tt" style="top:0.52px">Frame 12: 5404 bytes on wire (43232 bits), 5404 bytes captured (43232 bits)</span></div>
<div class="tr top" style="top:306.10px"><svg class="tw" viewBox="0 0 10 10"><path d="M3.8 2.6 L8.95 5.25 L3.8 7.9 Z"/></svg><span class="tt" style="top:-0.08px">Linux cooked capture v1</span></div>
<div class="tr top" style="top:315.70px"><svg class="tw" viewBox="0 0 10 10"><path d="M3.8 2.6 L8.95 5.25 L3.8 7.9 Z"/></svg><span class="tt" style="top:0.32px">Internet Protocol Version 4, Src: 127.0.0.1, Dst: 127.0.0.1</span></div>
<div class="tr top" style="top:325.30px"><svg class="tw" viewBox="0 0 10 10"><path d="M3.8 2.6 L8.95 5.25 L3.8 7.9 Z"/></svg><span class="tt" style="top:0.72px">Transmission Control Protocol, Src Port: 58005, Dst Port: 33856, Seq: 16570, Ack: 3055, Len: 5336</span></div>
<div class="tr sub" style="top:334.90px"><svg class="tw" viewBox="0 0 10 10"><path d="M3.8 2.6 L8.95 5.25 L3.8 7.9 Z"/></svg><span class="tt" style="top:0.12px">[2 Reassembled TCP Segments (21720 bytes): #11(16384), #12(5336)]</span></div>
<div class="tr top" style="top:344.50px"><svg class="tw" viewBox="0 0 10 10"><path d="M3.4 3.4 L9.5 3.4 L6.45 7.7 Z"/></svg><span class="tt" style="top:0.52px">WebSocket</span></div>
<div class="tr kid" style="top:354.10px"><span class="tt" style="top:-0.08px">1... .... = Fin: True</span></div>
<div class="tr kid" style="top:363.70px"><span class="tt" style="top:0.32px">.000 .... = Reserved: 0x0</span></div>
<div class="tr kid" style="top:373.30px"><span class="tt" style="top:0.72px">.... 0010 = Opcode: Binary (2)</span></div>
<div class="tr kid" style="top:382.90px"><span class="tt" style="top:0.12px">0... .... = Mask: False</span></div>
<div class="tr kid" style="top:392.50px"><span class="tt" style="top:0.52px">.111 1110 = Payload length: 126 Extended Payload Length (16 bits)</span></div>
<div class="tr kid" style="top:402.10px"><span class="tt" style="top:-0.08px">Extended Payload length (16 bits): 21716</span></div>
<div class="tr kid" style="top:411.70px"><span class="tt" style="top:0.32px">Payload</span></div>
<div class="tr top" style="top:421.30px"><svg class="tw" viewBox="0 0 10 10"><path d="M3.4 3.4 L9.5 3.4 L6.45 7.7 Z"/></svg><span class="tt" style="top:0.72px">Data (21716 bytes)</span></div>
<div class="tr kid sel" style="top:430.90px"><span class="tt" style="top:0.12px">Data: 1f8b0800000000000003ecbd6993ab46d62efa571c75bf5d198b7970c489b88010421248…</span></div>
<div class="tr kid" style="top:440.50px"><span class="tt" style="top:0.52px">[Length: 21716]</span></div>
</div>
<div class="split" style="top:466.7px;height:4.3px"></div>
<div id="hex">

<div class="hr" style="top:471.00px"><div class="ht" style="top:1.02px"><span class="ho">0000</span><span class="hb">82 7e 54 d4 <b>1f 8b 08 00  00 00 00 00 00 03 ec bd</b></span><span class="ha"><i>·</i>~T<i>·</i><b><i>·</i><i>·</i><i>·</i><i>·</i> <i>·</i><i>·</i><i>·</i><i>·</i><i>·</i><i>·</i><i>·</i><i>·</i></b></span></div></div>
<div class="hr" style="top:479.00px"><div class="ht" style="top:1.02px"><span class="ho">0010</span><span class="hb"><b>69 93 ab 46 d6 2e fa 57  1c 75 bf 5d 19 8b 79 70</b></span><span class="ha"><b>i<i>·</i><i>·</i>F<i>·</i>.<i>·</i>W <i>·</i>u<i>·</i>]<i>·</i><i>·</i>yp</b></span></div></div>
<div class="hr" style="top:487.00px"><div class="ht" style="top:1.02px"><span class="ho">0020</span><span class="hb"><b>c4 89 b8 80 10 42 12 48  0c 1a 5d 0e 05 33 48 4c</b></span><span class="ha"><b><i>·</i><i>·</i><i>·</i><i>·</i><i>·</i>B<i>·</i>H <i>·</i><i>·</i>]<i>·</i><i>·</i>3HL</b></span></div></div>
<div class="hr" style="top:495.00px"><div class="ht" style="top:1.02px"><span class="ho">0030</span><span class="hb"><b>62 94 e8 e8 ff 7e 13 4d  a5 aa 5d db de 76 ef dd</b></span><span class="ha"><b>b<i>·</i><i>·</i><i>·</i><i>·</i>~<i>·</i>M <i>·</i><i>·</i>]<i>·</i><i>·</i>v<i>·</i><i>·</i></b></span></div></div>
<div class="hr" style="top:503.00px"><div class="ht" style="top:1.02px"><span class="ho">0040</span><span class="hb"><b>dd e7 9c b7 23 da 5b c5  90 64 ae e1 59 cf 5a 99</b></span><span class="ha"><b><i>·</i><i>·</i><i>·</i><i>·</i>#<i>·</i>[<i>·</i> <i>·</i>d<i>·</i><i>·</i>Y<i>·</i>Z<i>·</i></b></span></div></div>
<div class="hr" style="top:511.00px"><div class="ht" style="top:1.02px"><span class="ho">0050</span><span class="hb"><b>09 ff 78 b1 d3 c4 0b fd  5d 69 5a 91 fb f2 eb 3f</b></span><span class="ha"><b><i>·</i><i>·</i>x<i>·</i><i>·</i><i>·</i><i>·</i><i>·</i> ]iZ<i>·</i><i>·</i><i>·</i><i>·</i>?</b></span></div></div>
<div class="hr" style="top:519.00px"><div class="ht" style="top:1.02px"><span class="ho">0060</span><span class="hb"><b>ba bf 8b 2a 76 f3 5d ee  16 6e b9 2b 5c 3b 77 cb</b></span><span class="ha"><b><i>·</i><i>·</i><i>·</i>*v<i>·</i>]<i>·</i> <i>·</i>n<i>·</i>+\;w<i>·</i></b></span></div></div>
<div class="hr" style="top:527.00px"><div class="ht" style="top:1.02px"><span class="ho">0070</span><span class="hb"><b>e2 e5 d7 df c0 a9 dc 35  4b d7 d9 99 e5 cb af 08</b></span><span class="ha"><b><i>·</i><i>·</i><i>·</i><i>·</i><i>·</i><i>·</i><i>·</i>5 K<i>·</i><i>·</i><i>·</i><i>·</i><i>·</i><i>·</i><i>·</i></b></span></div></div>
<div class="hr" style="top:535.00px"><div class="ht" style="top:1.02px"><span class="ho">0080</span><span class="hb"><b>89 90 30 8d 13 04 fd f3  e3 96 97 5f 5f 60 cf b1</b></span><span class="ha"><b><i>·</i><i>·</i>0<i>·</i><i>·</i><i>·</i><i>·</i><i>·</i> <i>·</i><i>·</i><i>·</i>__`<i>·</i><i>·</i></b></span></div></div>
<div class="hr" style="top:543.00px"><div class="ht" style="top:1.02px"><span class="ho">0090</span><span class="hb"><b>2c c6 66 20 84 a1 4c 08  87 1d 0b 62 50 0f 86 4c</b></span><span class="ha"><b>,<i>·</i>f <i>·</i><i>·</i>L<i>·</i> <i>·</i><i>·</i><i>·</i>bP<i>·</i><i>·</i>L</b></span></div></div>
<div class="hr" style="top:551.00px"><div class="ht" style="top:1.02px"><span class="ho">00a0</span><span class="hb"><b>db 41 4c 07 66 28 0b 41  5e 7e 7e a9 32 e7 d3 96</b></span><span class="ha"><b><i>·</i>AL<i>·</i>f(<i>·</i>A ^~~<i>·</i>2<i>·</i><i>·</i><i>·</i></b></span></div></div>
<div class="hr" style="top:559.00px"><div class="ht" style="top:1.02px"><span class="ho">00b0</span><span class="hb"><b>ae 4f 03 ed 58 72 25 2e  b0 05 27 65 f9 2c 5e 1b</b></span><span class="ha"><b><i>·</i>O<i>·</i><i>·</i>Xr%. <i>·</i><i>·</i>&#x27;e<i>·</i>,^<i>·</i></b></span></div></div>
<div class="hr" style="top:567.00px"><div class="ht" style="top:1.02px"><span class="ho">00c0</span><span class="hb"><b>13 ba 11 74 a5 b1 f8 4a  1d ba 86 a6 9e 41 1b 76</b></span><span class="ha"><b><i>·</i><i>·</i><i>·</i>t<i>·</i><i>·</i><i>·</i>J <i>·</i><i>·</i><i>·</i><i>·</i><i>·</i>A<i>·</i>v</b></span></div></div>
<div class="hr" style="top:575.00px"><div class="ht" style="top:1.02px"><span class="ho">00d0</span><span class="hb"><b>14 ba 49 b9 33 1d a7 7b  30 42 a1 bf a0 f0 2f f0</b></span><span class="ha"><b><i>·</i><i>·</i>I<i>·</i>3<i>·</i><i>·</i>{ 0B<i>·</i><i>·</i><i>·</i><i>·</i>/<i>·</i></b></span></div></div>
<div class="hr" style="top:583.00px"><div class="ht" style="top:1.02px"><span class="ho">00e0</span><span class="hb"><b>2f 28 0a ce 15 a5 59 56  a0 d3 c8 cf 2f a1 03 ce</b></span><span class="ha"><b>/(<i>·</i><i>·</i><i>·</i><i>·</i>YV <i>·</i><i>·</i><i>·</i><i>·</i>/<i>·</i><i>·</i><i>·</i></b></span></div></div>
<div class="hr" style="top:591.00px"><div class="ht" style="top:1.02px"><span class="ho">00f0</span><span class="hb"><b>ba 16 8a bb b0 6d 42 30  66 a1 10 8e 99 38 64 21</b></span><span class="ha"><b><i>·</i><i>·</i><i>·</i><i>·</i><i>·</i>mB0 f<i>·</i><i>·</i><i>·</i><i>·</i>8d!</b></span></div></div>
<div class="hr" style="top:599.00px"><div class="ht" style="top:1.02px"><span class="ho">0100</span><span class="hb"><b>28 01 61 2e 63 a2 b4 49  60 30 43 be fc f3 f7 9f</b></span><span class="ha"><b>(<i>·</i>a.c<i>·</i><i>·</i>I `0C<i>·</i><i>·</i><i>·</i><i>·</i><i>·</i></b></span></div></div>
<div class="hr" style="top:607.00px"><div class="ht" style="top:1.02px"><span class="ho">0110</span><span class="hb"><b>5f b2 a8 f2 c3 e4 d3 e1  12 0c c3 a0 04 fe f3 4b</b></span><span class="ha"><b>_<i>·</i><i>·</i><i>·</i><i>·</i><i>·</i><i>·</i><i>·</i> <i>·</i><i>·</i><i>·</i><i>·</i><i>·</i><i>·</i><i>·</i>K</b></span></div></div>
<div class="hr" style="top:615.00px"><div class="ht" style="top:1.02px"><span class="ho">0120</span><span class="hb"><b>53 ec 2e 8d a2 16 6d 91  84 e5 40 16 8e 32 10 8e</b></span><span class="ha"><b>S<i>·</i>.<i>·</i><i>·</i><i>·</i>m<i>·</i> <i>·</i><i>·</i>@<i>·</i><i>·</i>2<i>·</i><i>·</i></b></span></div></div>
<div class="hr" style="top:623.00px"><div class="ht" style="top:1.02px"><span class="ho">0130</span><span class="hb"><b>bb 18 64 39 36 05 39 24  82 62 88 6d c1 a4 89 bd</b></span><span class="ha"><b><i>·</i><i>·</i>d96<i>·</i>9$ <i>·</i>b<i>·</i>m<i>·</i><i>·</i><i>·</i><i>·</i></b></span></div></div>
</div>
</div>
</body>
</html>
